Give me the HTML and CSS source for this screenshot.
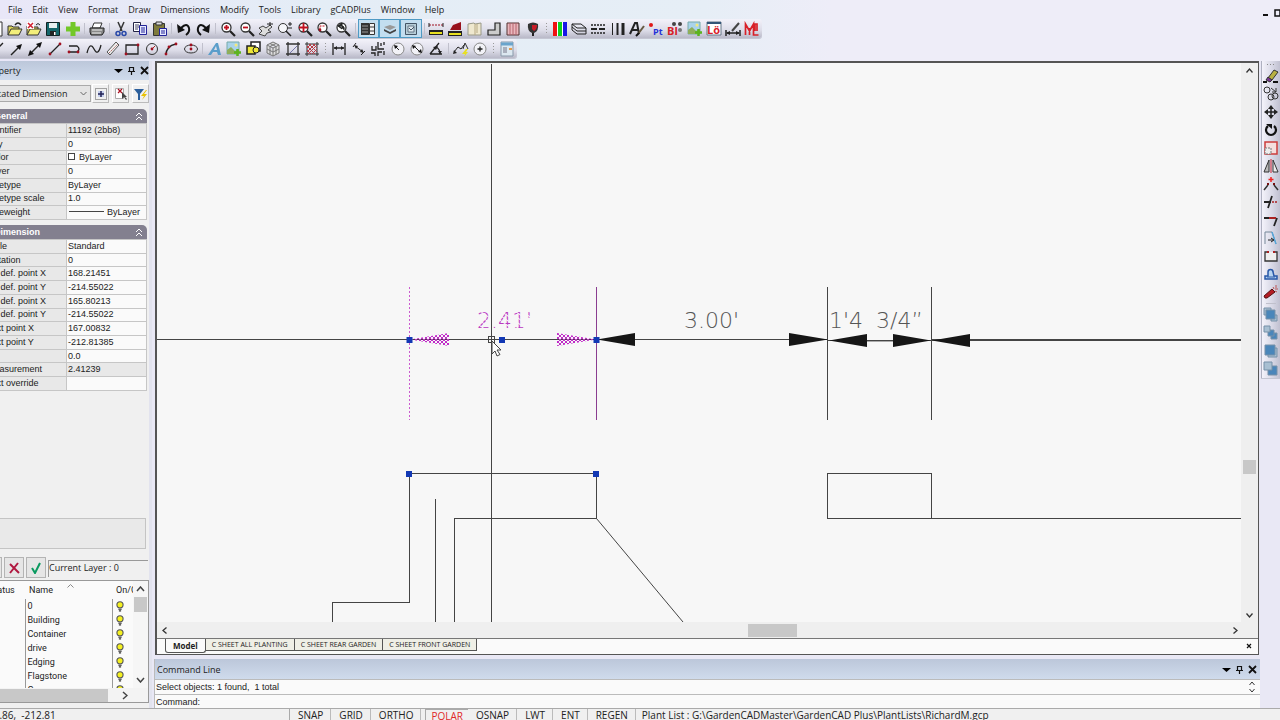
FILE: index.html
```html
<!DOCTYPE html>
<html lang="en">
<head>
    <meta charset="UTF-8">
    <meta name="viewport" content="width=device-width, initial-scale=1.0">
    <title>GardenCAD Plus</title>
    <link rel="stylesheet" href="styles.css">
</head>
<body>
    <header class="top">
        <nav class="menubar">
            <a href="#">File</a>
            <a href="#">Edit</a>
            <a href="#">View</a>
            <a href="#">Format</a>
            <a href="#">Draw</a>
            <a href="#">Dimensions</a>
            <a href="#">Modify</a>
            <a href="#">Tools</a>
            <a href="#">Library</a>
            <a href="#">gCADPlus</a>
            <a href="#">Window</a>
            <a href="#">Help</a>
            <div class="window-buttons">
                <button aria-label="Minimize"><svg width="6" height="10"><path d="M0 7h5" stroke="#111" stroke-width="2"/></svg></button>
                <button aria-label="Restore"><svg width="6" height="10"><path d="M1 2h5v6H1z" fill="none" stroke="#111" stroke-width="1.5"/></svg></button>
            </div>
        </nav>
        <div class="toolbar toolbar-main" id="mainTools"></div>
        <div class="toolbar toolbar-draw" id="drawTools"></div>
    </header>

    <main class="workspace">
        <aside class="side">
            <div class="panel-title">
                <span>Property</span>
                <button aria-label="Property menu"><svg width="9" height="9"><path d="M0 3h9L4.500 7z"/></svg></button>
                <button aria-label="Pin property"><svg width="9" height="9"><path d="M2.500 5V1.500h4V5M1 5.500h7M4.500 6v3" fill="none" stroke="#111" stroke-width="1.200"/></svg></button>
                <button aria-label="Close property"><svg width="9" height="9"><path d="M1 1l7 7M8 1L1 8" stroke="#111" stroke-width="1.800"/></svg></button>
            </div>
            <div class="picker">
                <select aria-label="Selected object">
                    <option>Rotated Dimension</option>
                </select>
                <svg class="picker-arrow" width="7" height="5"><path d="M.5 1l3 3 3-3" fill="none" stroke="#666"/></svg>
                <button aria-label="Select all"><svg width="14" height="14"><path d="M1.500 1.500h11v11h-11z" fill="none" stroke="#555" stroke-dasharray="1 1"/><path d="M4 4h6v6H4z" fill="#c5d0ee"/><path d="M7 4v6M4 7h6" stroke="#225" stroke-width="1.500"/></svg></button>
                <button aria-label="Pick"><svg width="14" height="14"><path d="M1.500 1.500h8v10h-8z" fill="#fff" stroke="#aaa"/><path d="M4 2l4 4M8 2L4 6" stroke="#a12" stroke-width="1.200"/><path d="M8 5v7l2-2 2 3 1-1-2-2h2z" fill="#444"/></svg></button>
                <button aria-label="Filter"><svg width="14" height="14"><path d="M0 2h10L6 7v6H4V7z" fill="#2c5f9c"/><path d="M12 3L7 9h3l-2 4 5-6h-3l3-4z" fill="#e8c200"/></svg></button>
            </div>
            <div class="group-title">General <svg width="8" height="9"><path d="M1 4l3-3 3 3M1 8l3-3 3 3" fill="none" stroke="#fff"/></svg></div>
            <table class="props props-general">
                <tr class="locked"><th>Identifier</th><td>11192 (2bb8)</td></tr>
                <tr><th>Key</th><td>0</td></tr>
                <tr><th>Color</th><td><span class="swatch"></span>ByLayer</td></tr>
                <tr><th>Layer</th><td>0</td></tr>
                <tr><th>Linetype</th><td>ByLayer</td></tr>
                <tr><th>Linetype scale</th><td>1.0</td></tr>
                <tr><th>Lineweight</th><td><span class="weight"></span>ByLayer</td></tr>
            </table>
            <div class="group-title">Dimension <svg width="8" height="9"><path d="M1 4l3-3 3 3M1 8l3-3 3 3" fill="none" stroke="#fff"/></svg></div>
            <table class="props props-dimension">
                <tr><th>Style</th><td>Standard</td></tr>
                <tr><th>Rotation</th><td>0</td></tr>
                <tr><th>P1 def. point X</th><td>168.21451</td></tr>
                <tr><th>P1 def. point Y</th><td>-214.55022</td></tr>
                <tr><th>P2 def. point X</th><td>165.80213</td></tr>
                <tr><th>P2 def. point Y</th><td>-214.55022</td></tr>
                <tr><th>Text point X</th><td>167.00832</td></tr>
                <tr><th>Text point Y</th><td>-212.81385</td></tr>
                <tr><th></th><td>0.0</td></tr>
                <tr class="locked"><th>Measurement</th><td>2.41239</td></tr>
                <tr><th>Text override</th><td></td></tr>
            </table>
            <div class="hint"></div>
            <div class="layer-tools">
                <button aria-label="New layer"></button>
                <button aria-label="Delete layer"><svg width="12" height="12"><path d="M2 2l9 9M10 1L2 11" stroke="#b01840" stroke-width="2"/></svg></button>
                <button aria-label="Set current layer"><svg width="12" height="12"><path d="M2 6l3 5 5-10" fill="none" stroke="#0a9a60" stroke-width="2"/></svg></button>
                <span class="current-layer">Current Layer : 0</span>
            </div>
            <div class="layers">
                <div class="layer-view">
                    <table>
                        <thead>
                            <tr><th>Status</th><th class="sorted">Name<svg width="7" height="4"><path d="M.5 3.500l3-3 3 3" fill="none" stroke="#888"/></svg></th><th>On/Off</th></tr>
                        </thead>
                        <tbody id="layerRows"></tbody>
                    </table>
                    <div class="vscroll">
                        <svg width="9" height="6"><path d="M1 5l3.500-4L8 5" fill="none" stroke="#444" stroke-width="1.500"/></svg>
                        <div class="thumb"></div>
                        <svg width="9" height="6"><path d="M1 1l3.500 4L8 1" fill="none" stroke="#444" stroke-width="1.500"/></svg>
                    </div>
                </div>
                <div class="hscroll">
                    <div class="thumb"></div>
                    <svg width="6" height="9"><path d="M1 1l4 3.500L1 8" fill="none" stroke="#444" stroke-width="1.500"/></svg>
                </div>
            </div>
        </aside>

        <section class="center">
            <div class="document">
                <div class="view">
                    <svg class="drawing" role="img" aria-label="Model space drawing">
                        <defs>
                            <pattern id="hatch" width="4" height="4" patternUnits="userSpaceOnUse">
                                <path d="M0 0l4 4M4 0L0 4" stroke="#c02cc8" stroke-width="1"/>
                            </pattern>
                            <pattern id="dots" width="4" height="4" patternUnits="userSpaceOnUse" patternTransform="rotate(35)">
                                <rect width="4" height="3" fill="#b93ac0"/>
                            </pattern>
                        </defs>
                        <g transform="translate(-157 -63)">
                            <g class="lines">
                                <path d="M332.500 622V602.500H409.500V473.500H596.500V518.500H454.500V622M435.500 499V622"/>
                                <path d="M827.500 473.500H931.500V518.500M827.500 473V518.500H1241"/>
                                <path class="slope" d="M596.500 518.500L683 622"/>
                                <path d="M157 339.500H828M828 340.500H1241M931 339.500H1241"/>
                                <path class="pale" d="M866 341.500H893"/>
                                <path d="M827.500 287V420M931.500 287V420"/>
                            </g>
                            <path class="ext" d="M409.500 287V420" stroke-dasharray="2 2"/>
                            <path class="ext ext-solid" d="M596.500 287V420"/>
                            <path d="M410 339.500L449 333V346zM596 339.500L557 333V346z" fill="url(#hatch)"/>
                            <path class="arrow" d="M597 339.500L635 333V346zM828 339.500L789 333V346zM829 340.500L867 334V347zM931 340.500L893 334V347zM932 340.500L970 334V347z"/>
                            <text x="477" y="328" fill="url(#dots)">2.41'</text>
                            <text x="684" y="328">3.00'</text>
                            <text x="829" y="328">1'4</text>
                            <text x="876" y="328">3/4”</text>
                            <path class="cross" d="M491.500 64V622"/>
                            <path class="grip" d="M406.500 337h6v6h-6zM499 337h6v6h-6zM593.500 337h6v6h-6zM406 471h6v6h-6zM593 471h6v6h-6z"/>
                            <path class="cursor" d="M488.500 336.500h6v6h-6z"/>
                            <path class="pointer" d="M492 341V354L495 351L497 356L500 354.500L497 350H501z"/>
                        </g>
                    </svg>
                    <div class="vscroll">
                        <svg width="7" height="5"><path d="M.5 4.500l3-3.500 3 3.500" fill="none" stroke="#333" stroke-width="1.300"/></svg>
                        <div class="thumb"></div>
                        <svg width="7" height="5"><path d="M.5.5l3 3.500 3-3.500" fill="none" stroke="#333" stroke-width="1.300"/></svg>
                    </div>
                </div>
                <div class="hscroll">
                    <svg width="5" height="7"><path d="M4.500.5L1 3.500l3.500 3" fill="none" stroke="#333" stroke-width="1.300"/></svg>
                    <div class="thumb"></div>
                    <svg width="5" height="7"><path d="M.5.5L4 3.500l-3.500 3" fill="none" stroke="#333" stroke-width="1.300"/></svg>
                </div>
                <div class="sheets">
                    <button class="active">Model</button>
                    <button>C SHEET ALL PLANTING</button>
                    <button>C SHEET REAR GARDEN</button>
                    <button>C SHEET FRONT GARDEN</button>
                    <button class="sheet-close" aria-label="Close sheet"><svg width="6" height="6"><path d="M1 1l4 4M5 1L1 5" stroke="#111" stroke-width="1.200"/></svg></button>
                </div>
            </div>
            <div class="command">
                <div class="panel-title">
                    <span>Command Line</span>
                    <button aria-label="Command menu"><svg width="9" height="9"><path d="M0 3h9L4.500 7z"/></svg></button>
                    <button aria-label="Pin command line"><svg width="9" height="9"><path d="M2.500 5V1.500h4V5M1 5.500h7M4.500 6v3" fill="none" stroke="#111" stroke-width="1.200"/></svg></button>
                    <button aria-label="Close command line"><svg width="9" height="9"><path d="M1 1l7 7M8 1L1 8" stroke="#111" stroke-width="1.800"/></svg></button>
                </div>
                <div class="history">
                    <span>Select objects: 1 found,&nbsp; 1 total</span>
                    <svg width="6" height="12"><path d="M.5 4L3 1l2.500 3M.5 8L3 11l2.500-3" fill="none" stroke="#333"/></svg>
                </div>
                <div class="prompt">
                    <label for="cmd">Command:</label>
                    <input id="cmd" type="text">
                </div>
            </div>
        </section>

        <div class="modify">
            <div class="toolbar toolbar-side" id="sideTools"></div>
        </div>
    </main>

    <footer class="statusbar">
        <div class="coords">65.86,&nbsp; -212.81</div>
        <button>SNAP</button>
        <button>GRID</button>
        <button>ORTHO</button>
        <button class="on">POLAR</button>
        <button>OSNAP</button>
        <button>LWT</button>
        <button>ENT</button>
        <button>REGEN</button>
        <div class="plantlist">Plant List : G:\GardenCADMaster\GardenCAD Plus\PlantLists\RichardM.gcp</div>
    </footer>
    <script src="toolbars.js"></script>
</body>
</html>
```

FILE: styles.css
```css
* {
    box-sizing: border-box;
}
body {
    margin: 0;
    height: 100vh;
    display: flex;
    flex-direction: column;
    overflow: hidden;
    background: #e9e8f5;
    color: #222;
    font-family: "Open Sans", "Noto Sans", sans-serif;
    font-size: 9px;
}
button {
    padding: 0;
    border: 0;
    background: none;
    color: inherit;
    font: inherit;
    display: flex;
    align-items: center;
    justify-content: center;
}
svg {
    display: block;
    flex: none;
}
table {
    border-collapse: collapse;
    table-layout: fixed;
}

/* menu and toolbars */
.top {
    background: linear-gradient(90deg, #e9e7f8, #e4edf6 25%, #e6eef6 55%, #eeedf8 65%);
    height: 61px;
    flex: none;
}
.menubar {
    display: flex;
    gap: 10px;
    height: 19px;
    align-items: center;
    padding-left: 8px;
}
.menubar a {
    color: #222;
    text-decoration: none;
}
.window-buttons {
    display: flex;
    gap: 5px;
    margin-left: auto;
    align-self: flex-end;
    height: 12px;
}
.toolbar {
    display: flex;
    height: 19px;
    margin-bottom: 1px;
    background: linear-gradient(#f3f2fa, #dcdce8 60%, #b9b9c8);
    border-radius: 0 3px 3px 0;
    box-shadow: 0 1px 0 #c4c6d3;
}
.toolbar button {
    flex: 1;
    min-width: 0;
}
.toolbar button.pressed {
    background: #c3def0;
    border: 1px solid #4f9ac4;
}
.toolbar .sep {
    width: 5px;
    margin: 4px 0;
    background: linear-gradient(#c0c0cc, #c0c0cc) center / 1px 100% no-repeat;
}
.toolbar .handle {
    width: 8px;
    margin: 4px 0;
    background: repeating-linear-gradient(#999 0 1px, transparent 1px 3px) center / 1px 100% no-repeat;
}
.toolbar-main {
    width: 776px;
    margin-left: -14px;
}
.toolbar-draw {
    width: 530px;
    margin-left: -13px;
}
.modify {
    width: 20px;
    padding: 0 0 0 1px;
    flex: none;
}
.toolbar-side {
    flex-direction: column;
    height: auto;
    background: linear-gradient(90deg, #f4f3fb, #d6d6e4 60%, #c0c0d0);
    border-left: 1px solid #aeb0c0;
    border-radius: 0;
}
.toolbar-side button {
    flex: none;
    height: 18px;
}
.toolbar-side .handle {
    width: auto;
    height: 6px;
    margin: 0 5px;
    background: repeating-linear-gradient(90deg, #888 0 1px, transparent 1px 3px) center / 100% 1px no-repeat;
}
.toolbar-side .sep {
    width: auto;
    height: 5px;
    margin: 0 4px;
    background: linear-gradient(#c0c0cc, #c0c0cc) center / 100% 1px no-repeat;
}

/* the side panel runs out of the window on the left */
.workspace {
    flex: 1;
    display: flex;
    min-height: 0;
}
.side {
    width: 168px;
    margin-left: -16px;
    flex: none;
    display: flex;
    flex-direction: column;
    background: #f0f0f0;
    border-right: 3px solid #e2e3ee;
    padding-bottom: 5px;
}
.panel-title {
    display: flex;
    gap: 4px;
    height: 19px;
    align-items: center;
    flex: none;
    background: linear-gradient(#bcc7da, #cfdbec);
}
.panel-title span {
    margin-right: auto;
}
.picker {
    display: flex;
    gap: 3px;
    height: 29px;
    padding: 4px 0 6px;
    flex: none;
}
.picker select {
    appearance: none;
    width: 107px;
    height: 17px;
    margin-top: 1px;
    padding: 0 0 0 2px;
    border: 1px solid #aaa;
    border-radius: 0;
    background: #e4e4e4;
    color: #222;
    font: 9px "Open Sans", sans-serif;
}
.picker-arrow {
    margin: 7px 2px 0 -14px;
}
.picker button {
    width: 17px;
    border: 1px solid #bbb;
    border-left-color: #fff;
    border-top-color: #fff;
}
.group-title {
    display: flex;
    justify-content: space-between;
    align-items: center;
    height: 14px;
    width: 163px;
    flex: none;
    padding: 0 4px 0 10px;
    border-radius: 0 5px 0 0;
    background: #83808f;
    color: #fff;
    font: bold 9px "Liberation Sans", Arial, sans-serif;
}
.props {
    width: 163px;
    font: 9px "Liberation Sans", Arial, sans-serif;
    margin-bottom: 5px;
}
.props-general {
    height: 97px;
}
.props-dimension {
    height: 152px;
    margin: 0;
}
.props th,
.props td {
    padding: 0 1px;
    border: 1px solid #c6c6c6;
    font-weight: normal;
    text-align: left;
    line-height: 11px;
    white-space: nowrap;
    overflow: hidden;
}
.props th {
    width: 82px;
    padding-left: 2px;
    background: #e8e8e8;
}
.props td {
    background: #fafafa;
}
.props .locked td {
    background: #e8e8e8;
}
.swatch {
    display: inline-block;
    width: 7px;
    height: 7px;
    margin-right: 4px;
    border: 1px solid #444;
    background: #fff;
}
.weight {
    display: inline-block;
    width: 35px;
    height: 3px;
    margin: 0 3px 3px 1px;
    border-bottom: 1px solid #444;
}
.hint {
    height: 31px;
    width: 162px;
    margin: auto 0 8px;
    flex: none;
    border: 1px solid #c4c4c4;
    background: #e9e9e9;
}
.layer-tools {
    display: flex;
    gap: 2px;
    height: 23px;
    flex: none;
}
.layer-tools button {
    width: 20px;
    height: 21px;
    border: 1px solid #b4b4b4;
    background: #e6e6e6;
}
.layer-tools button:first-child {
    width: 18px;
}
.current-layer {
    flex: 1;
    margin: 3px 1px 3px 0;
    line-height: 14px;
    border-top: 1px solid #999;
    border-left: 1px solid #999;
}
.layers {
    height: 123px;
    flex: none;
    display: flex;
    flex-direction: column;
    border: 1px solid #999;
    background: #fafafa;
    font-family: Roboto, "Noto Sans", sans-serif;
}
.layer-view {
    flex: 1;
    display: flex;
    min-height: 0;
    overflow: hidden;
}
.layers table {
    width: 148px;
    height: 116px;
}
.layers th,
.layers td {
    padding: 0 0 0 2px;
    line-height: 13px;
    text-align: left;
    font-weight: normal;
    white-space: nowrap;
}
.layers th {
    height: 18px;
    padding-left: 4px;
    overflow: hidden;
}
.layers th:nth-child(1) {
    width: 40px;
}
.layers th:nth-child(2) {
    width: 87px;
}
.layers td {
    height: 14px;
}
.layers td + td {
    border-left: 1px solid #999;
}
.sorted svg {
    float: right;
    margin-right: 38px;
}
.vscroll {
    display: flex;
    flex-direction: column;
    align-items: center;
    justify-content: space-between;
    background: #efefef;
}
.thumb {
    background: #c8c8c8;
}
.layers .vscroll {
    flex: 1;
    padding: 5px 0;
    background: #f6f6f6;
}
.layers .vscroll .thumb {
    width: 13px;
    height: 15px;
    margin-bottom: auto;
    margin-top: 5px;
}
.layers .hscroll {
    display: flex;
    height: 14px;
    align-items: center;
    gap: 14px;
    background: #f3f3f3;
}
.layers .hscroll .thumb {
    width: 123px;
    height: 13px;
}

/* drawing window */
.center {
    flex: 1;
    min-width: 0;
    display: flex;
    flex-direction: column;
    padding-left: 2px;
}
.document {
    flex: 1;
    min-height: 0;
    display: flex;
    flex-direction: column;
    margin: 0 1px 4px 1px;
    border: 1px solid #555;
    border-width: 2px 1px 1px 2px;
    background: #f7f7f7;
}
.view {
    flex: 1;
    display: flex;
    min-height: 0;
}
.drawing {
    flex: 1;
    min-width: 0;
    height: 100%;
}
.lines path,
.cross,
.cursor {
    fill: none;
    stroke: #444;
    stroke-width: 1px;
    shape-rendering: crispEdges;
}
.lines .slope {
    shape-rendering: auto;
}
.lines .pale {
    stroke: #aaa;
}
.ext {
    stroke: #cc5cd0;
    stroke-width: 1px;
    shape-rendering: crispEdges;
}
.ext-solid {
    stroke: #8a3d90;
}
.arrow {
    fill: #161616;
}
.grip {
    fill: #1238b4;
}
.pointer {
    fill: #fff;
    stroke: #444;
}
.drawing text {
    font-family: "DejaVu Sans Light", "DejaVu Sans", sans-serif;
    font-size: 22px;
    font-weight: 200;
    fill: #555;
}
.drawing text[fill] {
    fill: url(#dots);
}
.view .vscroll {
    width: 17px;
    padding: 5px 0 4px;
}
.view .thumb {
    width: 13px;
    height: 14px;
    margin-top: 248px;
}
.document > .hscroll {
    display: flex;
    align-items: center;
    justify-content: space-between;
    height: 16px;
    flex: none;
    padding: 0 20px 0 5px;
    background: #efefef;
}
.document > .hscroll .thumb {
    width: 49px;
    height: 13px;
    margin-left: 144px;
}
.sheets {
    display: flex;
    height: 16px;
    flex: none;
    padding-left: 8px;
    border-top: 1px solid #777;
    background: #fafafa;
}
.sheets button {
    height: 12px;
    padding: 0 6px;
    border: 1px solid #555;
    border-top: 0;
    border-left: 0;
    background: #efefe6;
    font-size: 7px;
    line-height: 10px;
}
.sheets .active {
    height: 14px;
    padding: 0 7px;
    border-left: 1px solid #555;
    border-radius: 0 0 3px 3px;
    background: #fafafa;
    font-size: 8px;
    font-weight: bold;
}
.sheets .sheet-close {
    height: 14px;
    margin-left: auto;
    border: 0;
    background: none;
}

/* command line */
.command {
    flex: none;
    background: #fafafa;
    border-left: 1px solid #bbb;
}
.command .panel-title {
    height: 20px;
    padding: 0 3px 0 2px;
}
.history,
.prompt {
    display: flex;
    height: 15px;
    align-items: center;
    justify-content: space-between;
    padding: 0 5px 0 1px;
    border-top: 1px solid #bbb;
    font: 9px "Liberation Sans", Arial, sans-serif;
}
.prompt {
    height: 14px;
}
.prompt input {
    flex: 1;
    min-width: 0;
    height: 11px;
    padding: 0 2px;
    border: 0;
    background: none;
    font: inherit;
}

/* status bar */
.statusbar {
    display: flex;
    height: 12px;
    flex: none;
    border-top: 1px solid #aaa;
    background: #f0f0f0;
    font-size: 10px;
    line-height: 12px;
    white-space: nowrap;
    overflow: hidden;
}
.coords {
    width: 306px;
    margin-left: -16px;
    padding-left: 4px;
    border-right: 1px solid #aaa;
}
.statusbar button {
    height: 12px;
    padding: 0 7px;
    margin-left: 1px;
    border-right: 1px solid #bbb;
}
.statusbar .on {
    margin-left: 4px;
    border: 1px solid #aaa;
    border-right: 0;
    border-bottom: 0;
    padding: 0 5px;
    color: #e02828;
}
.plantlist {
    padding-left: 6px;
}
```

FILE: toolbars.js
```js
// every icon is drawn in a 16 x 16 box; '|' is a separator, ':' a drag handle
const K = 'fill="none" stroke="#222" stroke-width="1.3"';
const glass = '<circle cx="6.500" cy="6.500" r="4.500" fill="#fff" stroke="#333" stroke-width="1.3"/><path d="M10 10l5 5" stroke="#222" stroke-width="2.200"/>';
const folder = '<path d="M1 14V5h4l1 1h6v3" fill="#d9d25c" stroke="#333"/><path d="M1 14l3-6h11l-3 6z" fill="#f3ee7a" stroke="#333"/>';
const dot = (x, y) => `<circle cx="${x}" cy="${y}" r="1.4" fill="#a01020"/>`;
const picture = '<path d="M1 1h12v12H1z" fill="#a9d3ea" stroke="#7aa"/><path d="M1 13V9l4-3 4 4 4-2v5z" fill="#8fae5a"/><circle cx="10" cy="4" r="1.500" fill="#f5e87a"/><path d="M11.500 8v7M8 11.500h7" stroke="#5cb41e" stroke-width="2.500"/>';

const mainTools = [
    ['New', `<path d="M2 1h12v14H2z" fill="#fff" stroke="#333"/>`],
    ['Open', folder + `<path d="M8 4q3-4 6 0" ${K}/>`],
    ['Open DXF', folder + '<path d="M1 1h7v7H1z" fill="#fff"/><path d="M2 2l5 5M7 2L2 7" stroke="#d02030" stroke-width="1.5"/><path d="M10 4q2-3 4 0" fill="none" stroke="#222"/>'],
    ['Save', '<path d="M1.500 1.500h13v13h-13z" fill="#14666a" stroke="#122"/><path d="M4 2h8v5H4z" fill="#e8efef"/><path d="M5 10h6v4H5z" fill="#222"/><path d="M9 11h1.500v3H9z" fill="#fff"/>'],
    ['Add', '<path d="M5.500 1h5v4.500H15v5h-4.500V15h-5v-4.500H1v-5h4.500z" fill="#72c828"/>'],
    '|',
    ['Print', '<path d="M5 2h8l-2 5H3z" fill="#fff" stroke="#333"/><path d="M1 7h14v4l-2 3H2l-1-3z" fill="#888" stroke="#222"/><path d="M3 9h10M3 12h9" stroke="#eee"/>'],
    '|',
    ['Cut', '<path d="M5 1l4 9M11 1L7 10" stroke="#333" stroke-width="1.5"/><circle cx="5" cy="12.500" r="2" fill="none" stroke="#2747a8" stroke-width="1.5"/><circle cx="11" cy="12.500" r="2" fill="none" stroke="#2747a8" stroke-width="1.5"/>'],
    ['Copy', '<path d="M1.500 1.500h7v9h-7z" fill="#fff" stroke="#224"/><path d="M3 4h4M3 6h4M3 8h3" stroke="#446"/><path d="M7.500 4.500h7v9h-7z" fill="#e7ebff" stroke="#229"/><path d="M9 7h4M9 9h4M9 11h4" stroke="#229"/>'],
    ['Paste', '<path d="M1.500 2.500h11v12h-11z" fill="#7e7a3c" stroke="#333"/><path d="M4 1h6v3H4z" fill="#ddd" stroke="#333"/><path d="M7.500 7.500h7v7h-7z" fill="#e7ebff" stroke="#229"/><path d="M9 10h4M9 12h4" stroke="#229"/>'],
    '|',
    ['Undo', '<path d="M5 7q6-6 8 0 1 4-3 7" fill="none" stroke="#111" stroke-width="2"/><path d="M1 3l1 9 7-3z" fill="#111"/>'],
    ['Redo', '<path d="M11 7Q5 1 3 7q-1 4 3 7" fill="none" stroke="#111" stroke-width="2"/><path d="M15 3l-1 9-7-3z" fill="#111"/>'],
    '|',
    ['Zoom in', glass + '<path d="M6.500 4v5M4 6.500h5" stroke="#c01020" stroke-width="1.800"/>'],
    ['Zoom out', glass + '<path d="M4 6.500h5" stroke="#c01020" stroke-width="1.800"/>'],
    ['Pan', '<path d="M1 13l3-3-3-3 4-2 3 2 4-3 2 2-4 3 3 2-4 1-2 3z" fill="#ddd" stroke="#444"/><path d="M9 3h6M12 1v4" stroke="#222"/>'],
    ['Zoom dynamic', '<circle cx="6" cy="7" r="4.500" fill="#f6f6fa" stroke="#333"/><path d="M9 10l5 5" stroke="#222" stroke-width="1.500"/><path d="M13 1v4M11 3h4M11 7h4" stroke="#222"/>'],
    ['Zoom extents', glass + '<path d="M6.500 2v9M2 6.500h9" stroke="#c01020" stroke-width="1.800"/>'],
    ['Zoom window', glass + '<path d="M4 8.500V5h5" fill="none" stroke="#c01020" stroke-dasharray="2 1"/>' + dot(4, 9)],
    ['Zoom previous', glass + '<path d="M9 9q1-5-4-4M3 5l4-3v6z" fill="#222" stroke="#222"/>'],
    '|',
    ['Property panel', '<path d="M1 2h8v12H1z" fill="#333"/><path d="M2 5h6M2 8h6M2 11h6" stroke="#999"/><path d="M9.500 2.500h5v11h-5z" fill="#f4f4f4" stroke="#333"/><path d="M9 6h6M9 10h6" stroke="#333"/>', 1],
    ['Layer panel', '<path d="M2 6l6-2 6 2-6 3z" fill="#999"/><path d="M2 8l6 3 6-3v2l-6 3-6-3z" fill="#444"/>', 1],
    ['Command panel', '<path d="M2.500 2.500h11v11h-11z" fill="#b5ccd6" stroke="#456"/><path d="M5 5h6v6H5z" fill="#dce9ee" stroke="#678"/><path d="M6 7l2 2 3-3" fill="none" stroke="#456"/>', 1],
    '|',
    ['Distance', '<path d="M1 4h14" stroke="#a01020" stroke-dasharray="2 1"/><path d="M1 2v4M15 2v4" stroke="#222"/><path d="M1 9h14v5H1z" fill="#222"/><path d="M2 12h12" stroke="#e8e020" stroke-width="2"/>'],
    ['Area', '<path d="M3 9l3-5 8-3v8H3z" fill="#98101c"/><path d="M1 10h14v5H1z" fill="#222"/><path d="M2 13h12" stroke="#e8e020" stroke-width="2"/>'],
    ['Library', '<path d="M1 3l6-1 1 1 6-1v12H1z" fill="#efe8cf" stroke="#998"/><path d="M8 3v11M10 3v9" stroke="#b7a983"/>'],
    ['Wall', '<path d="M9 2h5v12H2V9h7z" fill="#ccc" stroke="#222" stroke-width="1.200"/>'],
    ['Hatch', '<path d="M2 2h12v12H2z" fill="#eab7bd" stroke="#533"/><path d="M5 2v12M8 2v12M11 2v12" stroke="#b4626c"/>'],
    ['Plant', '<path d="M3 3q5-3 10 0 1 7-4 9H7Q2 10 3 3z" fill="#333"/><path d="M7 4h5q0 4-3 6l-2-2z" fill="#c81c28"/><path d="M8 12v3" stroke="#222" stroke-width="2"/>'],
    ':',
    ['Colors', '<path d="M1 1h4.500v14H1z" fill="#f01010"/><path d="M5.500 1h5v14h-5z" fill="#10d020"/><path d="M10.500 1H15v14h-4.500z" fill="#1818e8"/><path d="M5.500 1v14M10.500 1v14" stroke="#fff"/>'],
    ['Layers', '<path d="M1 3h9l5 4H6zM1 6l5 4h9M1 9l5 4h9M1 3v6M15 7v6" fill="none" stroke="#222"/>'],
    ['Linetypes', '<path d="M1 4h14M1 12h14" stroke="#222" stroke-width="1.5" stroke-dasharray="2 1"/><path d="M1 8h14" stroke="#222" stroke-width="2" stroke-dasharray="6 2"/>'],
    ['Lineweights', '<path d="M2.500 2v12" stroke="#222"/><path d="M7.500 2v12" stroke="#222" stroke-width="2"/><path d="M13 2v12" stroke="#222" stroke-width="3"/>'],
    ['Text style', '<path d="M1 13L6 2h2l2 11M3 9h7" fill="none" stroke="#222" stroke-width="2"/><path d="M9 13l6-8" stroke="#665a44" stroke-width="2"/><path d="M7 15l3-3" stroke="#111" stroke-width="2"/>'],
    ['Point style', '<circle cx="3" cy="4" r="2" fill="#e01818"/><text x="5" y="14" font-size="9" font-weight="bold" fill="#2430d8">Pt</text>'],
    ['Block', '<circle cx="7" cy="3" r="2" fill="#444"/><circle cx="13" cy="3" r="2" fill="#444"/><circle cx="13" cy="9" r="2" fill="#777"/><text x="0" y="14" font-size="11" font-weight="bold" fill="#d82028">Bl</text>'],
    ['Image', picture],
    ['Layout', '<path d="M1 1h14v13H1z" fill="#fff" stroke="#678"/><path d="M1 2h14" stroke="#357" stroke-width="2"/><text x="1" y="13" font-size="11" font-weight="bold" fill="#d82028">Lö</text>'],
    ['Dimension style', '<path d="M1 9v6M15 9v6M2 12h12" stroke="#222" stroke-width="1.5"/><path d="M1 12l4-2v4zM15 12l-4-2v4z" fill="#222"/><path d="M7 10l7-8" stroke="#444" stroke-width="2"/>'],
    ['Multiline style', '<path d="M1.500 14V3l4 7 4-7v11h5M5.500 14V7M11 10V3h2v7" fill="none" stroke="#d82028" stroke-width="1.700"/>']
];

const drawTools = [
    ['Line tool', `<path d="M2 14L14 2" ${K}/>`],
    ['Ray', '<path d="M3 14l8-8" stroke="#222" stroke-width="1.500"/><path d="M14 3l-2 6-4-4z" fill="#111"/>'],
    ['Construction line', '<path d="M4 12l8-8" stroke="#222" stroke-width="1.500"/><path d="M15 1l-2 6-4-4zM1 15l2-6 4 4z" fill="#111"/>'],
    ['Line', `<path d="M3 13L13 3" ${K}/>` + dot(3, 13) + dot(13, 3)],
    ['Polyline', `<path d="M3 5h8q4 3 0 6H2" ${K}/>` + dot(3, 11) + dot(12, 11)],
    ['Spline', `<path d="M1 12Q4 0 8 8t7-4" ${K}/>`],
    ['Multiline', '<path d="M2 11L11 1l3 3L5 14z" fill="#eee" stroke="#555"/><path d="M4 12l9-9" stroke="#a66" stroke-dasharray="2 1"/>'],
    ['Rectangle', `<path d="M2 4h12v9H2z" ${K}/>` + dot(2, 13) + dot(14, 4)],
    ['Circle', '<circle cx="8" cy="8" r="5.500" fill="none" stroke="#333"/><path d="M8 8l3-3" stroke="#a22"/>' + dot(8, 8)],
    ['Arc', `<path d="M3 14Q3 5 13 3" ${K}/>` + dot(3, 13) + dot(6, 6) + dot(13, 3)],
    ['Ellipse', '<ellipse cx="8" cy="8" rx="6.500" ry="4" fill="none" stroke="#333"/>' + dot(8, 8) + dot(8, 4)],
    '|',
    ['Text', '<path d="M1 14L9 2h2l3 12h-3l-1-3H6l-2 3zM7 9h3L9 5z" fill="#5b9ecb"/>'],
    ['Insert image', picture],
    ['Insert block', '<path d="M5 1h9v9H5z" fill="#fff" stroke="#222" stroke-width="1.500"/><path d="M1 5h8v8H1z" fill="#efe838" stroke="#222" stroke-width="1.500"/><circle cx="10" cy="9" r="3" fill="#efe838" stroke="#222"/>'],
    ['Mesh', '<path d="M8 1l6 3v8l-6 3-6-3V4zM2 4l6 3 6-3M8 7v8M5 2.500l6 3v8M11 2.500l-6 3v8M2 8l6 3 6-3" fill="#ddd" stroke="#777"/>'],
    ['Boundary', '<path d="M3 1v14M13 1v14M1 3h14M1 13h14" stroke="#333" stroke-width="1.300"/><path d="M5 12l7-7" stroke="#77a"/>'],
    ['Hatch fill', '<path d="M3 1v14M13 1v14M1 3h14M1 13h14" stroke="#333"/><path d="M3 7l4-4M3 11l8-8M4 13l9-9M8 13l5-5M3 9l4 4M3 5l8 8M5 3l8 8M9 3l4 4" stroke="#b43c46"/>'],
    ':',
    ['Linear dimension', '<path d="M2 2v12M14 2v12M3 7h10" stroke="#222" stroke-width="1.300"/><path d="M3 7l3-2v4zM13 7l-3-2v4z" fill="#222"/>'],
    ['Aligned dimension', '<path d="M2 6l3-4M10 14l4-4M4 5l8 6" stroke="#222"/><path d="M3 4l4 1-2 3zM13 12l-4-1 2-3z" fill="#222"/>'],
    ['Ordinate dimension', '<path d="M2 5v4h4v-4M1 12h4v3M8 15v-4h4M8 1v7h6M11 2v3M14 1v3M14 10v4" fill="none" stroke="#222" stroke-width="1.300"/>'],
    ['Radius dimension', '<circle cx="8" cy="8" r="6" fill="#f2f2f7" stroke="#888"/><path d="M9 9L6 6" stroke="#222"/><path d="M4 4l4 1-3 3z" fill="#111"/>'],
    ['Diameter dimension', '<circle cx="8" cy="8" r="6" fill="#f2f2f7" stroke="#888"/><path d="M5 5l6 6" stroke="#222"/><path d="M3 4l4 1-3 3zM13 12l-4-1 3-3z" fill="#111"/>'],
    ['Angular dimension', '<path d="M2 13h12M2 13L11 2M8 6q4 2 4 7" fill="none" stroke="#222" stroke-width="1.300"/><path d="M5 6l5-1-2 4zM10 10h4l-2 3z" fill="#222"/>'],
    '|',
    ['Leader', '<path d="M1 11l4-5 3 2 3-4" fill="none" stroke="#222"/><path d="M0 13l1-4 3 3z" fill="#222"/><path d="M10 8l2-6 3 6" fill="none" stroke="#333"/><path d="M13 8l-4 5h3l-1 3 4-5h-2l2-3z" fill="#e8e020"/>'],
    ['Center mark', '<circle cx="8" cy="8" r="6" fill="#f2f2f7" stroke="#888"/><path d="M8 5.500v5M5.500 8h5" stroke="#222" stroke-width="1.300"/>'],
    ':',
    ['Table', '<path d="M2 1h12v14H2z" fill="#dce8f0" stroke="#89a"/><path d="M2 3h12" stroke="#6aa4cc" stroke-width="3"/><path d="M4 7h4M4 9h4M4 11h4" stroke="#778"/><path d="M10 7h3v2h-3z" fill="#e49a4c"/>']
];

const back = '#a8bfd2';
const front = '#4a86ba';
const sq = (x, y, s, c) => `<path d="M${x} ${y}h${s}v${s}h-${s}z" fill="${c}" stroke="#7690a8"/>`;
const sideTools = [
    ':',
    ['Erase', '<path d="M5 10l6-8 4 2-6 8z" fill="#b8b040" stroke="#333"/><path d="M5 9l4 3-2 2-4-2z" fill="#7c3896" stroke="#333"/><path d="M0 14h4M10 14h5" stroke="#111" stroke-width="2"/>'],
    ['Copy object', '<g fill="none" stroke="#333"><circle cx="4" cy="4" r="3"/><circle cx="8" cy="11" r="3"/><circle cx="12" cy="10" r="3"/><path d="M8 2l5 4M13 2v4H9"/></g>'],
    ['Move', '<path d="M8 3v10M3 8h10" stroke="#222" stroke-width="1.500"/><path d="M8 1l3 4H5zM8 15l3-4H5zM1 8l4-3v6zM15 8l-4-3v6z" fill="#222"/>'],
    ['Rotate', '<path d="M5 4a5 5 0 1 0 6 0" fill="none" stroke="#111" stroke-width="2.200"/><path d="M3 2h6v5z" fill="#111"/>'],
    ['Scale', '<path d="M2 2h12v12H2z" fill="#f5dede" stroke="#cc3c3c" stroke-width="1.500"/><path d="M2 8h6v6H2z" fill="#eee" stroke="#777" stroke-dasharray="2 1"/>'],
    ['Mirror', '<path d="M6 2v12H1z" fill="#bbb" stroke="#333"/><path d="M10 2v12h5z" fill="#eee" stroke="#333"/><path d="M8 1v14" stroke="#c23"/>'],
    ['Explode', '<path d="M1 14l4-5M15 14l-4-5" stroke="#333" stroke-width="1.500"/><path d="M8 1v5M5.500 3.500h5" stroke="#e22" stroke-width="1.500"/><path d="M4 8h2M10 8h2" stroke="#711" stroke-width="2"/>'],
    ['Trim', '<path d="M1 8h7M9 2L5 14" stroke="#222" stroke-width="1.800"/><path d="M9 8h6" stroke="#a22" stroke-width="1.500" stroke-dasharray="2 1"/>'],
    ['Extend', '<path d="M1 6h6M14 6l-3 8" stroke="#222" stroke-width="1.800"/><path d="M6 6h7" stroke="#a22" stroke-width="2"/>'],
    ['Offset', '<path d="M2 14V2h7l4 12" fill="none" stroke="#789"/><path d="M9 2l4 12" stroke="#57a6d8" stroke-width="1.500"/><path d="M5 10h5M8 8l3 2-3 2" fill="none" stroke="#222"/>'],
    ['Break', '<path d="M5 4H2v9h12V4h-3" fill="#eee" stroke="#333" stroke-width="1.300"/><path d="M4 4h2M10 4h2" stroke="#a22" stroke-width="2"/>'],
    ['Fillet', '<path d="M2 13h12v-3h-3l-1-4a2.500 2.500 0 0 0-5 0v4H2z" fill="#b7d3f1" stroke="#2958a8" stroke-width="1.500"/><path d="M4 11h8" stroke="#2958a8"/>'],
    ['Edit', '<path d="M2 14l-1-2L9 5l3 3-8 6z" fill="#b41c24" stroke="#511"/><path d="M10 3l1 2M13 1v3M15 5h-3M14 8l-2-1" stroke="#b55"/>'],
    '|',
    ['Bring to front', sq(1, 1, 7, back) + sq(8, 8, 6, back) + sq(3, 3, 9, front)],
    ['Bring above', sq(8, 8, 6, front) + sq(5, 5, 6, front) + sq(1, 1, 6, back)],
    ['Send below', sq(5, 5, 9, back) + sq(2, 2, 10, front)],
    ['Send to back', sq(5, 5, 9, front) + sq(1, 1, 8, back)]
];

function fillToolbar(id, tools) {
    const bar = document.getElementById(id);
    tools.forEach(tool => {
        if (tool === '|' || tool === ':') {
            bar.innerHTML += `<span class="${tool === '|' ? 'sep' : 'handle'}"></span>`;
            return;
        }
        const [name, shape, pressed] = tool;
        bar.innerHTML += `<button aria-label="${name}"${pressed ? ' class="pressed"' : ''}><svg width="16" height="16" viewBox="0 0 16 16">${shape}</svg></button>`;
    });
}

fillToolbar('mainTools', mainTools);
fillToolbar('drawTools', drawTools);
fillToolbar('sideTools', sideTools);

const bulb = '<svg width="10" height="11" viewBox="0 0 8 10"><circle cx="4" cy="3.500" r="2.800" fill="#f4f020" stroke="#555"/><path d="M2.500 7.500h3M3 9h2" stroke="#333"/></svg>';
const layers = ['0', 'Building', 'Container', 'drive', 'Edging', 'Flagstone', 'Grasses'];
document.getElementById('layerRows').innerHTML = layers
    .map(layer => `<tr><td></td><td>${layer}</td><td>${bulb}</td></tr>`)
    .join('');
```
